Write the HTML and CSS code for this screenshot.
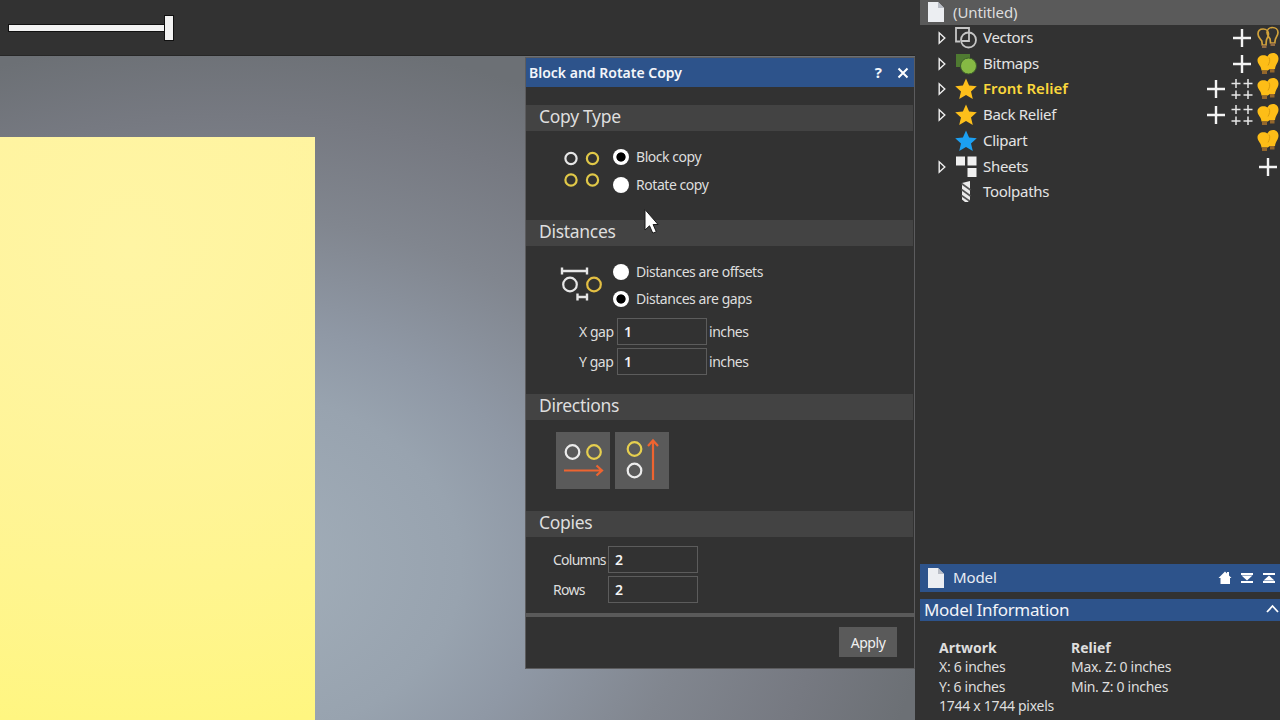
FILE: index.html
```html
<!DOCTYPE html>
<html lang="en">
<head>
<meta charset="utf-8">
<title>Block and Rotate Copy</title>
<link rel="stylesheet" href="styles.css">
</head>
<body>
<svg class="defs" width="0" height="0">
  <symbol id="page" viewBox="0 0 18 22"><path d="M1 1h10l6 6v14H1z" fill="#eceef2"/><path d="M11 1v6h6z" fill="#b9bdc6"/></symbol>
  <symbol id="arrow" viewBox="0 0 8 14"><path d="M1.200 1.800v10.400L6.800 7z" fill="none" stroke="#f0f0f0" stroke-width="1.400"/></symbol>
  <symbol id="star" viewBox="0 0 22 22"><path d="M11 .5l3.100 7.100 7.700.7-5.800 5.100 1.800 7.600L11 17l-6.800 4 1.800-7.600L.2 8.300l7.700-.7z" fill="currentColor"/></symbol>
  <symbol id="plus" viewBox="0 0 20 20"><path d="M10 1v18M1 10h18" stroke="#f4f4f4" stroke-width="2.400"/></symbol>
  <symbol id="snap" viewBox="0 0 22 20"><path d="M5 0v9M.5 4.500h9M17 0v9M12.500 4.500h9M5 11.500v9M.5 16h9M17 11.500v9M12.500 16h9" stroke="#e6e6e6" stroke-width="1.500"/></symbol>
  <symbol id="bulbs" viewBox="0 0 22 24"><path d="M4.500 18.500C4.300 14 .5 12 .5 8.500.5 5.300 3 3.300 6.500 3.300c1.700 0 2.900.5 3.900 1.200C11.500 2.300 13.500 1 16 1c3.500 0 5.500 2.500 5.500 5.500 0 4-3 6-3.500 10.500h-5l-2.300 1.500z" fill="#fdbd17"/><path d="M12 5.500c1.500 3 .3 5.500-1 8" fill="none" stroke="#dc9d0c"/><path d="M5 18.500h5V22H5zM13 17h4.500v3.500H13z" fill="#94672c"/></symbol>
  <symbol id="bulbs-off" viewBox="0 0 22 24"><path d="M5.300 19l-.5-4C2.500 12 1 11 1 8c0-3 2-5 5.200-5s5.300 2.300 5.300 5c0 3-2 4.500-2.200 7l-.3 4zM13.500 17l-.4-4c-2-3-3.100-4.300-3.100-6.500C10 3.500 12.500 1.500 15.500 1.500S21 3.500 21 6.500c0 3-2.500 5-2.800 7.500l-.4 3z" fill="none" stroke="#d2a33b" stroke-width="1.700"/><path d="M5 20.500h4.500M13.500 18.500H18" stroke="#916b43" stroke-width="3"/></symbol>
</svg>

<div class="app">
  <main class="workspace">
    <div class="toolbar"><div class="slider"><span class="track"></span><span class="thumb"></span></div></div>
    <div class="canvas"><div class="material"></div></div>

    <section class="dialog">
      <header class="titlebar">
        <span class="caption">Block and Rotate Copy</span>
        <span class="help">?</span>
        <svg class="close" width="12" height="12" viewBox="0 0 12 12"><path d="M1.500 1.500l9 9M10.500 1.500l-9 9" stroke="#fff" stroke-width="2"/></svg>
      </header>

      <h2 class="section">Copy Type</h2>
      <div class="group copy-type">
        <svg width="40" height="42" viewBox="0 0 40 42" fill="none" stroke-width="2.200"><circle cx="10" cy="11.500" r="5.600" stroke="#e6e6e6"/><circle cx="31.500" cy="11.500" r="5.600" stroke="#e0c848"/><circle cx="10" cy="33" r="5.600" stroke="#e0c848"/><circle cx="31.500" cy="33" r="5.600" stroke="#e0c848"/></svg>
        <div class="radios">
          <label><i class="radio on"></i><span>Block copy</span></label>
          <label><i class="radio"></i><span>Rotate copy</span></label>
        </div>
      </div>

      <h2 class="section">Distances</h2>
      <div class="group distances">
        <svg width="44" height="36" viewBox="0 0 44 36" fill="none"><path d="M2 4h25M2 .5v7M27 .5v7M17.500 30h9M17.500 26.500v7M27 26.500v7" stroke="#e6e6e6" stroke-width="2.400"/><circle cx="10" cy="17.500" r="6.800" stroke="#e6e6e6" stroke-width="2.200"/><circle cx="34" cy="17.500" r="6.800" stroke="#e3bf43" stroke-width="2.200"/></svg>
        <div class="radios">
          <label><i class="radio"></i><span>Distances are offsets</span></label>
          <label><i class="radio on"></i><span>Distances are gaps</span></label>
        </div>
      </div>
      <div class="fields gaps">
        <label><span class="lbl">X gap</span><b class="field">1</b><span class="unit">inches</span></label>
        <label><span class="lbl">Y gap</span><b class="field">1</b><span class="unit">inches</span></label>
      </div>

      <h2 class="section">Directions</h2>
      <div class="group directions">
        <svg class="tile" width="54" height="57" viewBox="0 0 54 57" fill="none" stroke-width="2.200"><circle cx="16.500" cy="20" r="6.800" stroke="#ececec"/><circle cx="38" cy="20" r="6.800" stroke="#e6cf4f"/><path d="M8 38.500h37M40.500 33.500l5.500 5-5.500 5" stroke="#ee6430"/></svg>
        <svg class="tile" width="54" height="57" viewBox="0 0 54 57" fill="none" stroke-width="2.200"><circle cx="19.500" cy="17" r="6.800" stroke="#e6cf4f"/><circle cx="19.500" cy="38.500" r="6.800" stroke="#ececec"/><path d="M38 48V9M33 14l5-5.500 5 5.500" stroke="#ee6430"/></svg>
      </div>

      <h2 class="section">Copies</h2>
      <div class="fields copies">
        <label><span class="lbl">Columns</span><b class="field">2</b></label>
        <label><span class="lbl">Rows</span><b class="field">2</b></label>
      </div>

      <footer class="foot"><div class="apply">Apply</div></footer>
    </section>

    <svg class="cursor" width="18" height="28" viewBox="0 0 18 28"><path d="M2 1.500v20.500l4.500-4.200 3.300 7.400 3.500-1.500-3.200-7.200h5z" fill="#fff" stroke="#1b1b1b"/></svg>
  </main>

  <aside class="side">
    <div class="doc"><svg width="18" height="22"><use href="#page"/></svg><span>(Untitled)</span></div>
    <ul class="tree">
      <li><svg class="arrow"><use href="#arrow"/></svg><svg class="ico" viewBox="0 0 22 22" fill="none" stroke="#c6c6c6" stroke-width="1.800"><path d="M5 14.500H1V1h13v4"/><circle cx="13.500" cy="13" r="7.500"/><path d="M14 5.500V14H7"/></svg><span class="name">Vectors</span><svg class="plus"><use href="#plus"/></svg><svg class="bulb"><use href="#bulbs-off"/></svg></li>
      <li><svg class="arrow"><use href="#arrow"/></svg><svg class="ico" viewBox="0 0 22 22"><path d="M1 1h14v13H1z" fill="#4f7a31"/><circle cx="13.500" cy="13" r="8" fill="#86b944" stroke="#3c5c2c"/></svg><span class="name">Bitmaps</span><svg class="plus"><use href="#plus"/></svg><svg class="bulb"><use href="#bulbs"/></svg></li>
      <li class="active"><svg class="arrow"><use href="#arrow"/></svg><svg class="ico gold"><use href="#star"/></svg><span class="name">Front Relief</span><svg class="plus"><use href="#plus"/></svg><svg class="snap"><use href="#snap"/></svg><svg class="bulb"><use href="#bulbs"/></svg></li>
      <li><svg class="arrow"><use href="#arrow"/></svg><svg class="ico gold"><use href="#star"/></svg><span class="name">Back Relief</span><svg class="plus"><use href="#plus"/></svg><svg class="snap"><use href="#snap"/></svg><svg class="bulb"><use href="#bulbs"/></svg></li>
      <li><span class="arrow"></span><svg class="ico sky"><use href="#star"/></svg><span class="name">Clipart</span><svg class="bulb"><use href="#bulbs"/></svg></li>
      <li><svg class="arrow"><use href="#arrow"/></svg><svg class="ico" viewBox="0 0 22 22" fill="#f0f0f0"><path d="M1 .5h9v9H1zM12.500 .5h9v9h-9zM12.500 12h9v9h-9z"/></svg><span class="name">Sheets</span><svg class="plus last"><use href="#plus"/></svg></li>
      <li><span class="arrow"></span><svg class="ico" viewBox="0 0 22 22"><path d="M7 2l8-2v18.500L13 21h-3l-3-2.500z" fill="#ececec"/><path d="M6.500 2.500l9 6.500M6.500 8.500l9 6.500M6.500 14.500l8 5.500" stroke="#555" stroke-width="1.600"/></svg><span class="name">Toolpaths</span></li>
    </ul>
    <div class="model">
      <svg width="18" height="22"><use href="#page"/></svg><span class="grow">Model</span>
      <svg class="mini" width="57" height="14" viewBox="0 0 57 14" fill="#fff"><path d="M7 .5l2 2V1h2v3.500L13.500 7H12v6H2.500V7H.5zM23 2h12v2H23zM23.500 4.500h11L29 9.500zM23 10h12v2H23zM45 2h12v2H45zM51 4.500l5.500 5h-11zM45 10h12v2H45z"/></svg>
    </div>
    <div class="info-head"><span>Model Information</span><svg width="13" height="12" viewBox="0 0 13 12"><path d="M1 8l5.500-6L12 8" fill="none" stroke="#fff" stroke-width="1.800"/></svg></div>
    <div class="info">
      <div><b>Artwork</b><span>X: 6 inches</span><span>Y: 6 inches</span><span>1744 x 1744 pixels</span></div>
      <div><b>Relief</b><span>Max. Z: 0 inches</span><span>Min. Z: 0 inches</span></div>
    </div>
  </aside>
</div>
</body>
</html>
```
FILE: styles.css
```css
* { box-sizing: border-box; }
body { margin: 0; width: 1280px; height: 720px; overflow: hidden; background: #323232; color: #dedede; font: 14px/18px "Noto Sans", sans-serif; white-space: nowrap; }
svg { display: block; flex: none; }
.defs { position: absolute; }
.app { display: grid; grid-template-columns: 915px 360px; column-gap: 5px; height: 720px; }
.workspace { position: relative; display: flex; flex-direction: column; height: 720px; }
.toolbar { height: 56px; flex: none; padding: 15px 0 0 9px; border-bottom: 1px solid #272727; }
.slider { display: flex; align-items: center; height: 25px; }
.track { width: 156px; height: 6px; background: #f2f2f2; box-shadow: 0 0 0 1px #111; }
.thumb { width: 8px; height: 24px; background: #f2f2f2; box-shadow: 0 0 0 1px #111; }
.canvas { flex: 1; padding-top: 81px; background: radial-gradient(ellipse 700px 530px at 230px 510px, #a3afba 0%, #98a3af 33%, #8f98a5 46%, #81868f 66%, #767981 85%, #6c7075 100%); }
.material { width: 315px; height: 583px; background: radial-gradient(circle 500px at 130px 110px, #fff5a4, rgba(255,245,164,0)), linear-gradient(#fff29a, #fff680); }

.dialog { position: absolute; left: 525px; top: 57px; width: 390px; height: 612px; border: 1px solid #5c5c5e; background: #323232; display: flex; flex-direction: column; letter-spacing: -.45px; }
.titlebar { display: flex; align-items: center; height: 29px; flex: none; padding: 0 5px 0 3px; background: #2d538b; color: #f4f6fa; font-weight: 600; letter-spacing: 0; margin-bottom: 18px; }
.caption { margin-right: auto; }
.help { margin: -2px 15px 0 0; font-size: 15px; font-weight: 700; }
.section { flex: none; height: 26px; margin: 0 1px 0 0; padding-left: 13px; background: #434343; font-size: 17.500px; line-height: 23px; font-weight: 400; letter-spacing: -.3px; }
.group { display: flex; flex: none; }
.copy-type { height: 89px; padding: 16px 0 0 35px; }
.radios { display: grid; }
.radios label { display: flex; align-items: center; gap: 7px; }
.radio { width: 16px; height: 16px; border-radius: 50%; background: #fff; }
.radio.on { background: radial-gradient(circle, #000 4.200px, #fff 5px); }
.copy-type .radios { grid-auto-rows: 28px; margin: -4px 0 0 12px; }
.distances { height: 71px; padding: 21px 0 0 34px; }
.distances .radios { grid-auto-rows: 27px; margin: -9px 0 0 9px; }
.fields { display: grid; flex: none; row-gap: 2px; align-content: start; }
.fields label { display: flex; align-items: center; height: 28px; }
.fields span { padding-top: 2px; }
.field { width: 90px; height: 27px; border: 1px solid #5c5c5c; padding-left: 6px; line-height: 26px; font-weight: 600; color: #f4f4f4; }
.gaps { height: 77px; padding-left: 53px; }
.gaps .lbl { width: 38px; }
.unit { margin-left: 2px; }
.directions { height: 91px; padding: 12px 0 0 30px; gap: 5px; }
.tile { background: #5a5a5a; }
.copies { height: 76px; padding: 8px 0 0 27px; }
.copies .lbl { width: 55px; letter-spacing: -.75px; }
.foot { flex: 1; border-top: 4px solid #5a5a5a; display: flex; justify-content: flex-end; padding: 10px 17px 0 0; }
.apply { width: 58px; height: 30px; background: #5a5a5a; line-height: 32px; text-align: center; color: #f0f0f0; }
.cursor { position: absolute; left: 643px; top: 208px; }

.side { display: flex; flex-direction: column; height: 720px; }
.doc, .model { display: flex; align-items: center; padding-left: 7px; gap: 8px; font-size: 15px; letter-spacing: -.1px; }
.doc { height: 25px; flex: none; padding-bottom: 2px; background: #5a5a5a; }
.tree { list-style: none; margin: 0; padding: 0; height: 539px; font-size: 15px; letter-spacing: -.3px; color: #e4e4e4; }
.tree li { display: flex; align-items: center; height: 25.750px; padding: 0 1px 0 18px; }
.arrow { width: 8px; height: 14px; }
.ico { width: 22px; height: 22px; margin: 0 6px 0 9px; }
.name { margin: -2px auto 0 0; }
.plus { width: 20px; height: 20px; margin-right: 5px; }
.plus.last { margin-right: 1px; }
.snap { width: 22px; height: 20px; margin-right: 4px; }
.bulb { width: 22px; height: 24px; }
.gold { color: #fdbf1b; }
.sky { color: #1ca0f2; }
.active .name { color: #fbd83c; font-weight: 600; letter-spacing: .05px; }
.model { height: 28px; flex: none; background: #2d538b; color: #e8ecf4; }
.grow { flex: 1; margin-top: -2px; }
.mini { margin-right: 5px; }
.info-head { display: flex; align-items: center; justify-content: space-between; height: 22px; flex: none; margin-top: 7px; padding: 0 1px 0 4px; background: #2d538b; color: #f2f4f8; font-size: 17px; letter-spacing: -.33px; }
.info { display: grid; grid-template-columns: 132px 1fr; padding: 17px 0 0 19px; line-height: 19.400px; letter-spacing: -.28px; }
.info div { display: grid; align-content: start; }
.info b { letter-spacing: 0; }
```
